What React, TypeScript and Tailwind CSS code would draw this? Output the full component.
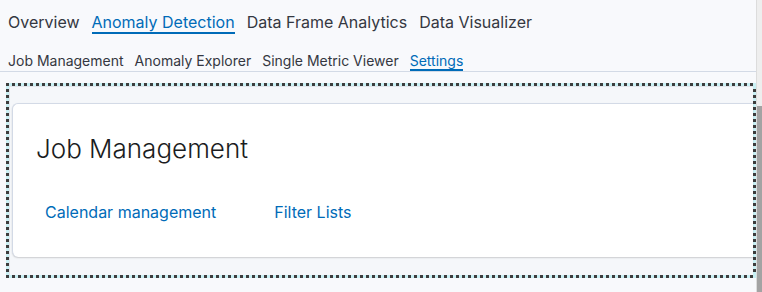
import React from "react";

const font = { fontFamily: "Inter, 'Noto Sans', sans-serif" };

export default function App() {
  const top = ["Overview", "Anomaly Detection", "Data Frame Analytics", "Data Visualizer"];
  const sub = ["Job Management", "Anomaly Explorer", "Single Metric Viewer", "Settings"];
  return (
    <div className="flex w-[762px] h-[292px] bg-[#f8f9fc] overflow-hidden" style={font}>
      <div className="flex-1 flex flex-col">
        <div className="flex gap-[12px] pl-[8px] pt-[12px]">
          {top.map((t) => (
            <div
              key={t}
              className={
                t === "Anomaly Detection"
                  ? "text-[16px] leading-[20px] border-b-2 border-[#006bb8] text-[#006bb8]"
                  : "text-[16px] leading-[20px] border-b-2 border-transparent text-[#343741]"
              }
            >
              {t}
            </div>
          ))}
        </div>
        <div className="flex gap-[11px] pl-[8px] pt-[19px] border-b border-[#d3dae6]">
          {sub.map((t) => (
            <div
              key={t}
              className={
                t === "Settings"
                  ? "text-[14px] leading-[16px] border-b-2 border-[#006bb8] text-[#006bb8]"
                  : "text-[14px] leading-[16px] border-b-2 border-transparent text-[#343741]"
              }
            >
              {t}
            </div>
          ))}
        </div>
        <div className="ml-[6px] mt-[11px] h-[195px] py-[3px] bg-[repeating-linear-gradient(90deg,#3d3d3d_0px,#3d3d3d_3px,#c9f0f4_3px,#c9f0f4_6px)]">
          <div className="h-full px-[3px] bg-[repeating-linear-gradient(180deg,#c9f0f4_0px,#c9f0f4_3px,#3d3d3d_3px,#3d3d3d_6px)]">
            <div className="h-full bg-[#f5f7fa] border-t border-l border-[#e3e6ec] pl-[2px] pt-[16px] pb-[18px]">
              <div className="h-full bg-white border-t border-l border-[#d3dae6] rounded-tl-[6px] rounded-bl-[6px] shadow-[0_1px_2px_rgba(0,0,0,0.12),0_1px_1px_rgba(0,0,0,0.06)] pl-[23px] pt-[29px]">
                <div className="text-[26px] leading-[32px] font-light text-[#1a1c21]">Job Management</div>
                <div className="flex mt-[35px] pl-[9px] gap-[58px]">
                  <span className="text-[16px] leading-[24px] text-[#006bb8]">Calendar management</span>
                  <span className="text-[16px] leading-[24px] text-[#006bb8]">Filter Lists</span>
                </div>
              </div>
            </div>
          </div>
        </div>
      </div>
      <div className="w-[6px] flex flex-col bg-[#eeeeee] border-l border-[#dcdcdc]">
        <div className="h-[106px]" />
        <div className="flex-1 bg-[#a3a3a3]" />
      </div>
    </div>
  );
}
